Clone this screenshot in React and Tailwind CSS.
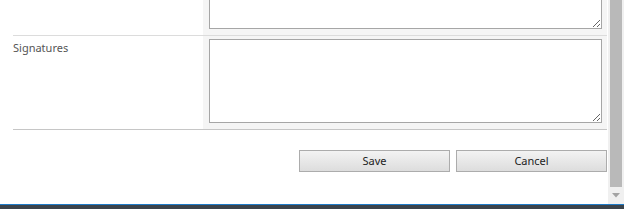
export default function App() {
  const font = { fontFamily: '"Segoe UI", "Noto Sans", "DejaVu Sans", sans-serif' }

  return (
    <div className="flex h-[209px] w-[624px] flex-col overflow-hidden bg-white" style={font}>
      <div className="flex h-[204px] flex-row">
        <div className="w-[608px] pl-[13px]">
          {/* previous field (cut off at top) */}
          <div className="flex h-[35px] overflow-hidden">
            <div className="w-[190px]" />
            <div className="flex w-[404px] items-end bg-[#f5f5f5] px-[6px] pb-[6px]">
              <textarea className="block h-[84px] w-[393px] shrink-0 border border-[#a6a6a6] bg-white outline-none" />
            </div>
          </div>
          <div className="h-px w-[594px] bg-[#dcdcdc]" />

          {/* Signatures row */}
          <div className="flex h-[93px]">
            <div className="w-[190px] pt-[5px] text-[11px] leading-[14px] text-[#555]">Signatures</div>
            <div className="w-[404px] bg-[#f5f5f5] px-[6px] pt-[3px]">
              <textarea className="block h-[84px] w-[393px] border border-[#a6a6a6] bg-white outline-none" />
            </div>
          </div>
          <div className="h-px w-[594px] bg-[#c6c6c6]" />

          {/* buttons */}
          <div className="flex w-[594px] justify-end gap-[6px] pt-[20px]">
            <button
              type="button"
              className="h-[22px] w-[151px] border border-[#acacac] bg-gradient-to-b from-[#f3f3f3] to-[#dddddd] text-[11px] text-[#222]"
            >
              Save
            </button>
            <button
              type="button"
              className="h-[22px] w-[151px] border border-[#acacac] bg-gradient-to-b from-[#f3f3f3] to-[#dddddd] text-[11px] text-[#222]"
            >
              Cancel
            </button>
          </div>
        </div>

        {/* scrollbar */}
        <div className="flex w-[16px] flex-col bg-[#f0f0f0] px-[2px]">
          <div className="h-[187px] bg-[#b9b9b9]" />
          <div className="flex flex-1 items-center justify-center">
            <svg width="8" height="5" viewBox="0 0 8 5">
              <path d="M0 0h8L4 4.5z" fill="#a3a3a3" />
            </svg>
          </div>
        </div>
      </div>
      <div className="h-px bg-[#1f7bc7]" />
      <div className="flex-1 bg-[#3b434b]" />
    </div>
  )
}
